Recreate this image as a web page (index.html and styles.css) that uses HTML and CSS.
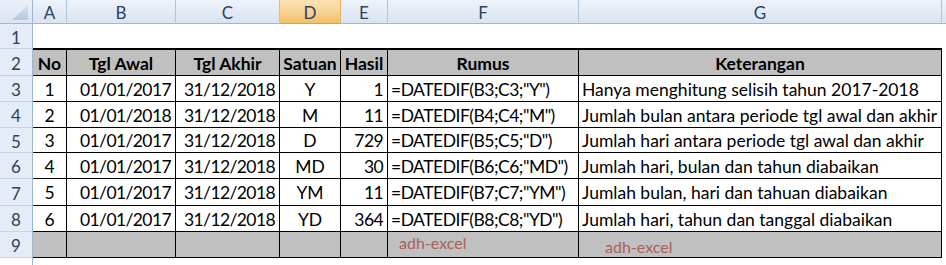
FILE: index.html
```html
<!DOCTYPE html>
<html>
<head>
<meta charset="utf-8">
<link rel="stylesheet" href="styles.css">
</head>
<body>
<div class="sheet">
  <div class="corner"><svg width="32" height="23" viewBox="0 0 32 23"><defs><linearGradient id="tg" x1="0" y1="0" x2="0" y2="1"><stop offset="0" stop-color="#d2dff0"/><stop offset="1" stop-color="#b7c9e0"/></linearGradient></defs><polygon points="12,20 28,20 28,5" fill="url(#tg)"/></svg></div>
  <div class="ch">A</div><div class="ch">B</div><div class="ch">C</div><div class="ch sel">D</div><div class="ch">E</div><div class="ch">F</div><div class="ch">G</div><div class="ch rest"></div>

  <div class="rh">1</div>
  <div class="c top"></div><div class="c top"></div><div class="c top"></div><div class="c top"></div><div class="c top"></div><div class="c top"></div><div class="c top"></div><div class="blank"></div>

  <div class="rh">2</div>
  <div class="c th">No</div><div class="c th">Tgl Awal</div><div class="c th">Tgl Akhir</div><div class="c th">Satuan</div><div class="c th">Hasil</div><div class="c th">Rumus</div><div class="c th">Keterangan</div><div class="blank"></div>

  <div class="rh">3</div>
  <div class="c ctr">1</div><div class="c rt num">01/01/2017</div><div class="c rt num">31/12/2018</div><div class="c ctr">Y</div><div class="c rt num">1</div><div class="c lt fx">=DATEDIF(B3;C3;"Y")</div><div class="c lt">Hanya menghitung selisih tahun 2017-2018</div><div class="blank"></div>

  <div class="rh">4</div>
  <div class="c ctr">2</div><div class="c rt num">01/01/2018</div><div class="c rt num">31/12/2018</div><div class="c ctr">M</div><div class="c rt num">11</div><div class="c lt fx">=DATEDIF(B4;C4;"M")</div><div class="c lt">Jumlah bulan antara periode tgl awal dan akhir</div><div class="blank"></div>

  <div class="rh">5</div>
  <div class="c ctr">3</div><div class="c rt num">01/01/2017</div><div class="c rt num">31/12/2018</div><div class="c ctr">D</div><div class="c rt num">729</div><div class="c lt fx">=DATEDIF(B5;C5;"D")</div><div class="c lt">Jumlah hari antara periode tgl awal dan akhir</div><div class="blank"></div>

  <div class="rh">6</div>
  <div class="c ctr">4</div><div class="c rt num">01/01/2017</div><div class="c rt num">31/12/2018</div><div class="c ctr">MD</div><div class="c rt num">30</div><div class="c lt fx">=DATEDIF(B6;C6;"MD")</div><div class="c lt">Jumlah hari, bulan dan tahun diabaikan</div><div class="blank"></div>

  <div class="rh">7</div>
  <div class="c ctr">5</div><div class="c rt num">01/01/2017</div><div class="c rt num">31/12/2018</div><div class="c ctr">YM</div><div class="c rt num">11</div><div class="c lt fx">=DATEDIF(B7;C7;"YM")</div><div class="c lt">Jumlah bulan, hari dan tahuan diabaikan</div><div class="blank"></div>

  <div class="rh">8</div>
  <div class="c ctr">6</div><div class="c rt num">01/01/2017</div><div class="c rt num">31/12/2018</div><div class="c ctr">YD</div><div class="c rt num">364</div><div class="c lt fx">=DATEDIF(B8;C8;"YD")</div><div class="c lt">Jumlah hari, tahun dan tanggal diabaikan</div><div class="blank"></div>

  <div class="rh">9</div>
  <div class="c foot"></div><div class="c foot"></div><div class="c foot"></div><div class="c foot"></div><div class="c foot"></div><div class="c foot lt"><span class="mark mark-f">adh-excel</span></div><div class="c foot lt"><span class="mark mark-g">adh-excel</span></div><div class="blank"></div>

  <div class="rh empty"></div>
  <div class="blank span"></div>
</div>
</body>
</html>
```

FILE: styles.css
```css
* { box-sizing: border-box; }
html, body { margin: 0; padding: 0; background: #ffffff; }
body { width: 946px; height: 265px; overflow: hidden; font-family: Lato, "Open Sans", sans-serif; }

.sheet {
  display: grid;
  grid-template-columns: 33px 34px 109px 104px 61px 47px 191px 363px 1fr;
  grid-template-rows: 24px 25px 27px 26px 26px 25px 26px 27px 26px 26px 10px;
}

.corner {
  background: linear-gradient(#eaf0f9, #dbe5f3);
  border-right: 1px solid #9eb6ce;
  border-bottom: 1px solid #9eb6ce;
  display: flex;
}
.corner svg { display: block; }

.ch {
  background: linear-gradient(#eef3fa 0%, #e3ebf6 50%, #d9e3f1 100%);
  border-right: 1px solid #b3c5db;
  border-bottom: 1px solid #9eb6ce;
  color: #2d4160;
  font-size: 17px;
  display: flex;
  align-items: center;
  justify-content: center;
  padding-top: 1px;
}
.ch.sel {
  background: linear-gradient(#fbe2b2 0%, #f8d394 50%, #f2c066 100%);
  border-bottom-color: #f29536;
  border-right-color: #f0b155;
}
.ch.rest { border-right: none; }

.rh {
  background: #e4ecf7;
  border-right: 1px solid #9eb6ce;
  border-bottom: 1px solid #c5d3e5;
  color: #2d4160;
  font-size: 17px;
  display: flex;
  align-items: center;
  justify-content: center;
  padding-top: 2px;
}
.rh.empty { background: #ffffff; border-bottom: none; }

.c {
  border-right: 1px solid #000000;
  border-bottom: 1px solid #000000;
  font-size: 17.5px;
  color: #000000;
  display: flex;
  align-items: center;
  white-space: nowrap;
  overflow: hidden;
  padding-top: 1px;
}
.c.top { border-right: none; }
.c.th {
  border-top: 1px solid #000000;
  background: #c0c0c0;
  font-weight: bold;
  justify-content: center;
}
.ctr { justify-content: center; }
.rt { justify-content: flex-end; padding-right: 4px; }
.lt { justify-content: flex-start; padding-left: 3px; }
.num { letter-spacing: -0.6px; }
.fx { letter-spacing: -0.5px; }

.c.foot { background: #c0c0c0; }

.blank { background: #ffffff; }
.blank.span { grid-column: 2 / -1; }

.mark {
  color: #a8615c;
  font-size: 16px;
}
.mark-f { padding-left: 8px; margin-bottom: 6px; }
.mark-g { padding-left: 23px; margin-top: 2px; }
```
